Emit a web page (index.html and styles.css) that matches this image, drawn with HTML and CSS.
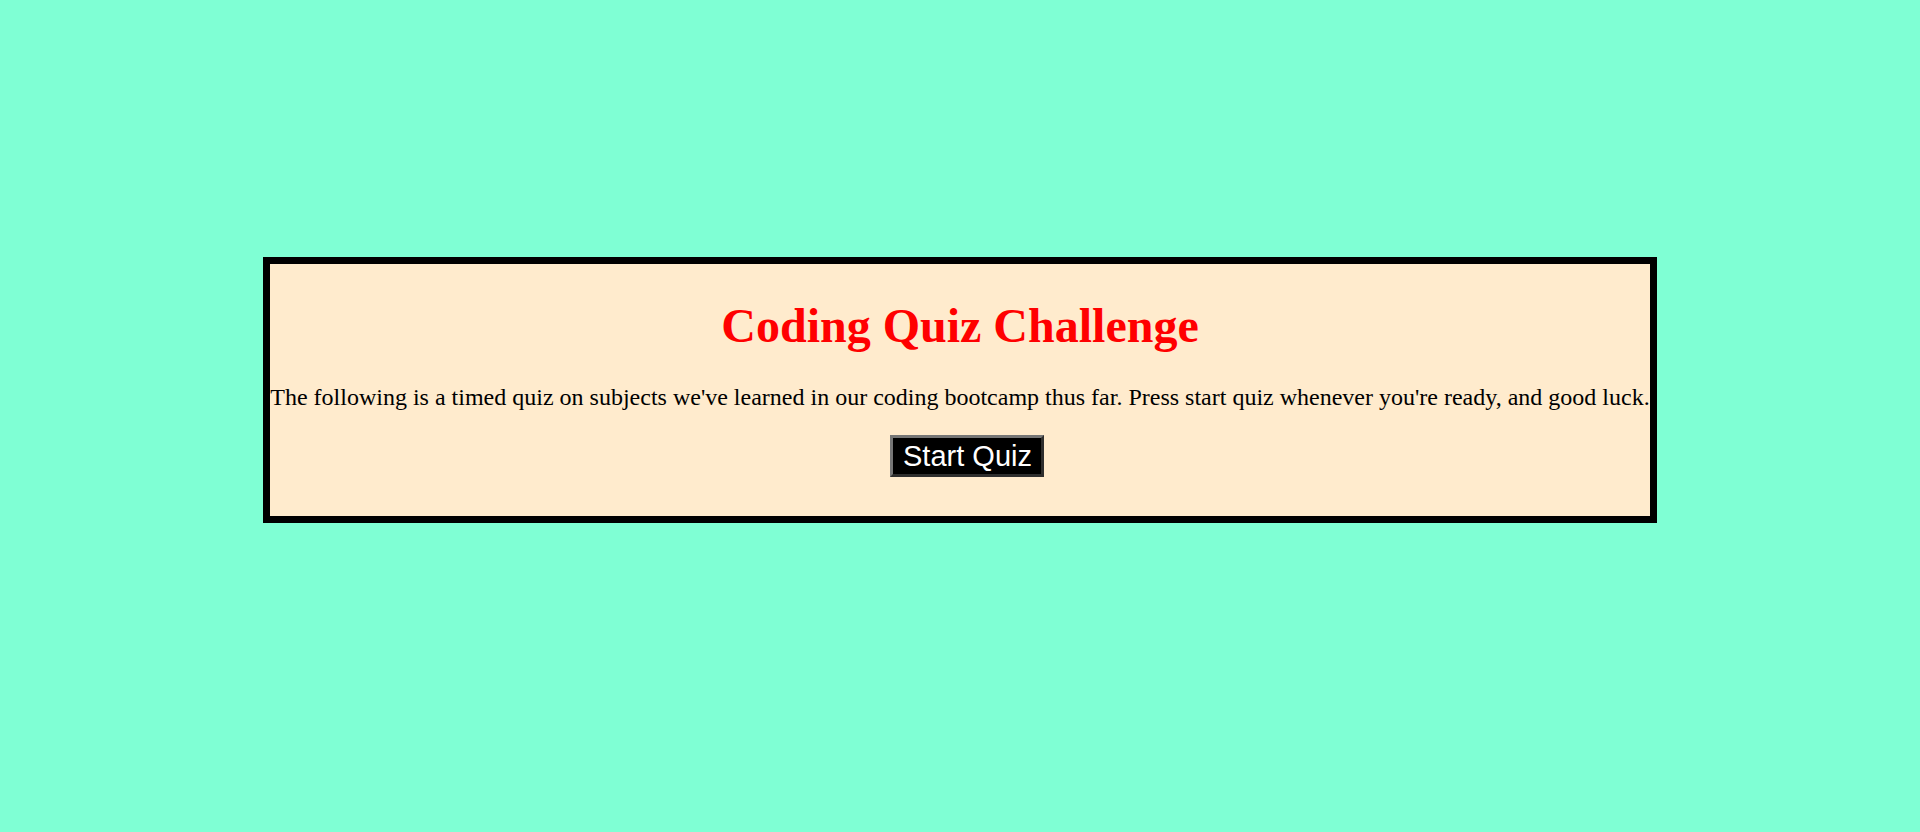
FILE: index.html
```html
<!DOCTYPE html>
<html lang="en">
<head>
<meta charset="utf-8">
<title>Coding Quiz Challenge</title>
<link rel="stylesheet" href="styles.css">
</head>
<body>
<main class="quiz-card">
  <h1 class="quiz-title">Coding Quiz Challenge</h1>
  <p class="quiz-intro">The following is a timed quiz on subjects we've learned in our coding bootcamp thus far. Press start quiz whenever you're ready, and good luck.</p>
  <button class="start-btn" type="button">Start Quiz</button>
</main>
</body>
</html>
```

FILE: styles.css
```css
html, body {
  margin: 0;
  padding: 0;
}

body {
  background: #7fffd4;
  font-family: "Liberation Serif", "Times New Roman", serif;
  min-height: 832px;
  padding-top: 257px;
  box-sizing: border-box;
}

.quiz-card {
  width: 1380px;
  margin: 0 auto;
  border: 7px solid #000;
  background: #ffebcd;
  text-align: center;
  padding: 34px 0 39px;
  display: flex;
  flex-direction: column;
  align-items: center;
}

.quiz-title {
  margin: 0;
  font-size: 48px;
  line-height: 56px;
  font-weight: bold;
  color: #ff0000;
}

.quiz-intro {
  margin: 29px 0 0;
  font-size: 24px;
  line-height: 28px;
  color: #000;
  white-space: nowrap;
}

.start-btn {
  margin-top: 24px;
  margin-left: 14px;
  font-family: "Liberation Sans", Arial, sans-serif;
  font-size: 29px;
  line-height: 34px;
  padding: 1px 9px 1px 10px;
  color: #fff;
  background: #000;
  border-style: solid;
  border-width: 3px;
  border-color: #767676 #2e2e2e #2e2e2e #767676;
  cursor: pointer;
}
```
